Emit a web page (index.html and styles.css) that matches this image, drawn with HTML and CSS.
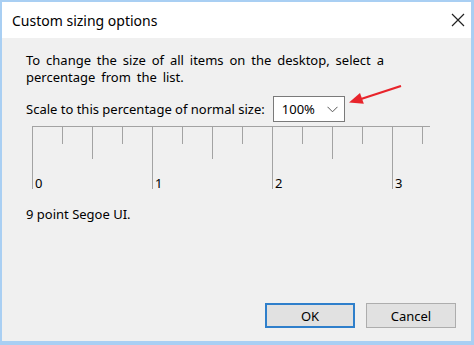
FILE: index.html
```html
<!DOCTYPE html>
<html>
<head>
<meta charset="utf-8">
<link rel="stylesheet" href="styles.css">
</head>
<body>
<div class="window">
  <div class="titlebar">
    <span class="title">Custom sizing options</span>
    <svg class="close" width="14" height="14" viewBox="0 0 14 14"><path d="M1 1L13 13M13 1L1 13" stroke="#222" stroke-width="1.2" fill="none"/></svg>
  </div>
  <div class="content">
    <p class="intro">To change the size of all items on the desktop, select a<br>percentage from the list.</p>
    <div class="scale-row">
      <span class="label">Scale to this percentage of normal size:</span>
      <div class="select">
        <span>100%</span>
        <svg width="11" height="7" viewBox="0 0 11 7"><path d="M0.5 0.8L5.5 5.8L10.5 0.8" stroke="#555" stroke-width="1" fill="none"/></svg>
      </div>
    </div>
    <div class="ruler">
      <div class="tick l"><span>0</span></div>
      <div class="tick s"></div>
      <div class="tick m"></div>
      <div class="tick s"></div>
      <div class="tick l"><span>1</span></div>
      <div class="tick s"></div>
      <div class="tick m"></div>
      <div class="tick s"></div>
      <div class="tick l"><span>2</span></div>
      <div class="tick s"></div>
      <div class="tick m"></div>
      <div class="tick s"></div>
      <div class="tick l"><span>3</span></div>
      <div class="tick s last"></div>
    </div>
    <p class="sample">9 point Segoe UI.</p>
    <div class="buttons">
      <button class="btn primary">OK</button>
      <button class="btn">Cancel</button>
    </div>
  </div>
  <svg class="arrow" width="60" height="24" viewBox="0 0 60 24"><path d="M52 1L12 14" stroke="#e8242b" stroke-width="2.2" fill="none"/><path d="M0 17.5L11 8L14.8 18.8Z" fill="#e8242b"/></svg>
</div>
</body>
</html>
```
FILE: styles.css
```css
html, body {
  margin: 0;
  padding: 0;
}
body {
  width: 474px;
  height: 345px;
  overflow: hidden;
  font-family: "Noto Sans", "Open Sans", sans-serif;
  color: #000;
}
.window {
  position: relative;
  box-sizing: border-box;
  width: 474px;
  height: 345px;
  border: 2px solid #a9cff3;
  border-right-width: 3px;
  border-bottom-width: 4px;
  display: flex;
  flex-direction: column;
  background: #f0f0f0;
}
.titlebar {
  height: 36px;
  flex: none;
  background: #fff;
  display: flex;
  align-items: center;
  justify-content: space-between;
  padding: 0 6px 0 10px;
}
.title {
  font-size: 14px;
  color: #000;
}
.close {
  display: block;
}
.content {
  flex: 1;
  display: flex;
  flex-direction: column;
  padding: 14px 15px 13px 24px;
  font-size: 13px;
  line-height: 18px;
}
.intro {
  margin: 0;
  line-height: 17px;
  word-spacing: 2.5px;
}
.scale-row {
  margin-top: 10px;
  display: flex;
  align-items: center;
  height: 26px;
}
.label {
  margin-right: 8px;
}
.select {
  box-sizing: border-box;
  width: 72px;
  height: 26px;
  border: 1px solid #7a7a7a;
  background: #fff;
  display: flex;
  align-items: center;
  justify-content: space-between;
  padding: 0 6px 0 8px;
}
.select svg {
  display: block;
  margin-top: 1px;
}
.ruler {
  margin: 4px 0 0 6px;
  width: 398px;
  border-top: 1px solid #a3a3a3;
  display: flex;
  align-items: flex-start;
}
.tick {
  flex: none;
  box-sizing: border-box;
  width: 30px;
  border-left: 1px solid #a3a3a3;
}
.tick.s { height: 17px; }
.tick.m { height: 32px; }
.tick.l {
  height: 62px;
  display: flex;
  align-items: flex-end;
}
.tick.l span {
  padding-left: 2px;
  line-height: 12px;
  font-size: 13px;
}
.tick.last { width: 8px; }
.sample {
  margin: 16px 0 0 0;
}
.buttons {
  margin-top: auto;
  display: flex;
  justify-content: flex-end;
  gap: 11px;
}
.btn {
  box-sizing: border-box;
  width: 90px;
  height: 25px;
  margin: 0;
  padding: 0;
  font-family: inherit;
  font-size: 13px;
  color: #000;
  background: #e1e1e1;
  border: 1px solid #adadad;
}
.btn.primary {
  border: 2px solid #2f7fcb;
}
.arrow {
  position: absolute;
  left: 347px;
  top: 83px;
}
```
